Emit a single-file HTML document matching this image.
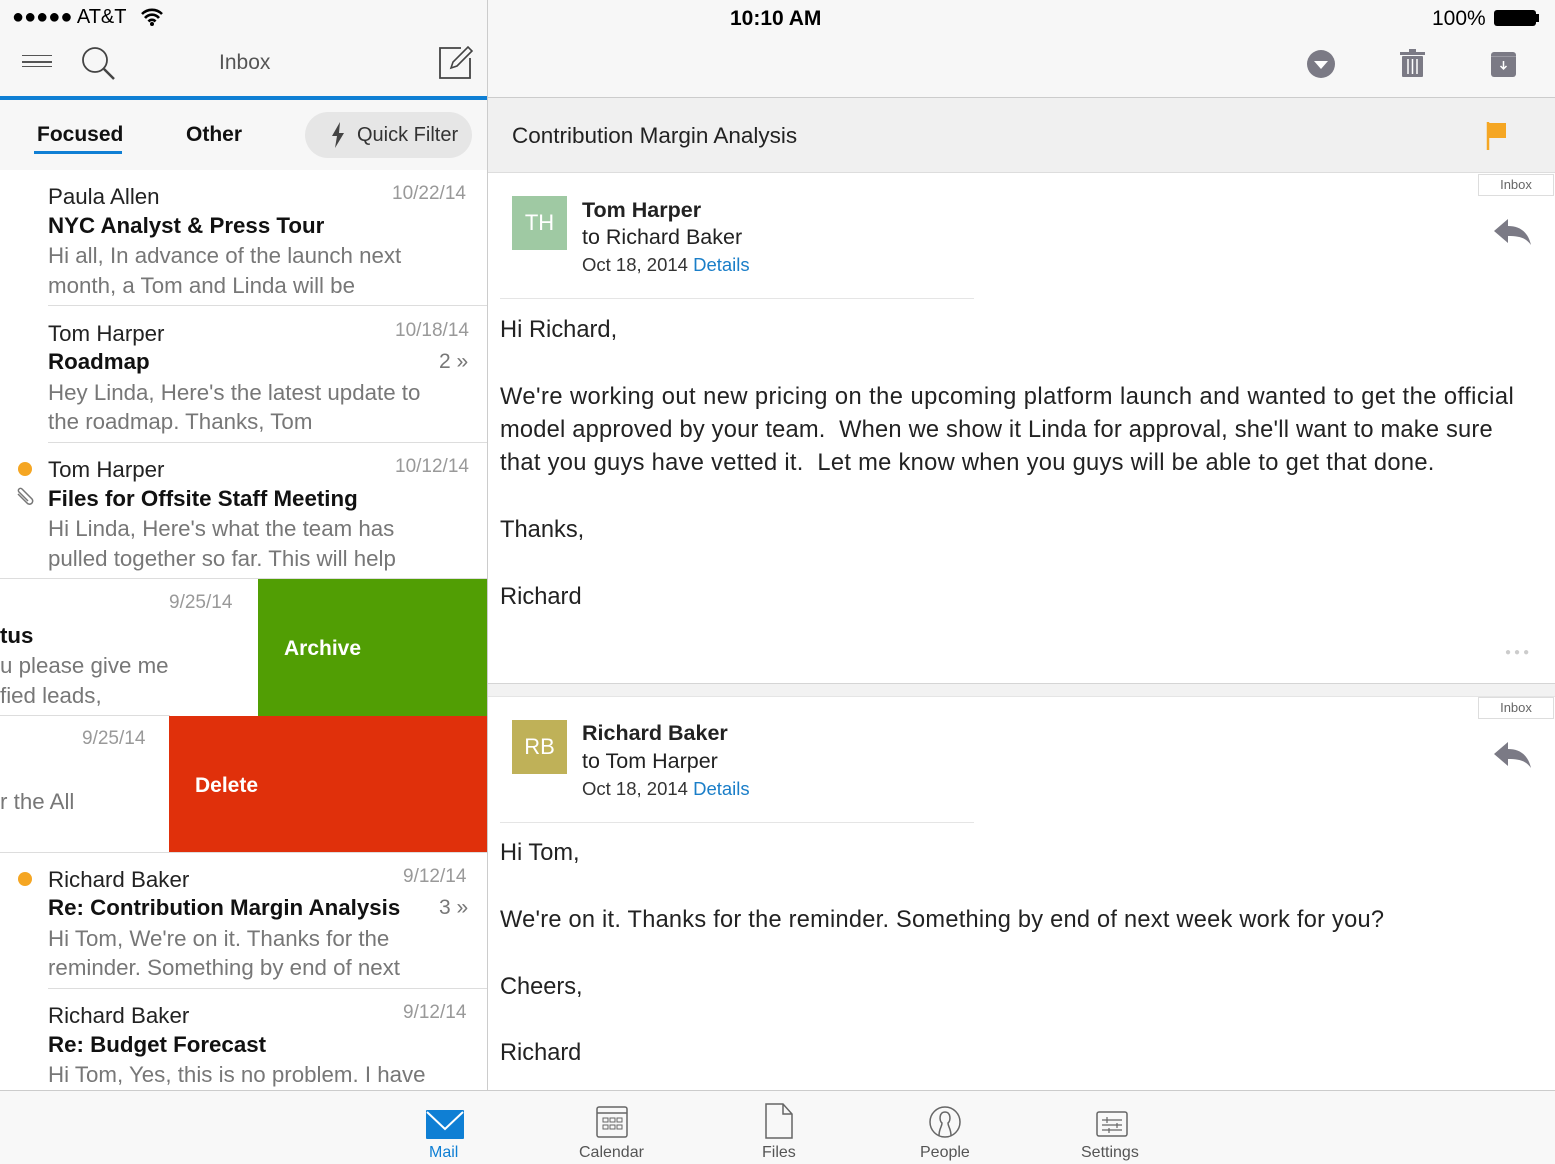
<!DOCTYPE html>
<html><head><meta charset="utf-8"><style>
*{margin:0;padding:0;box-sizing:border-box}
body{width:1555px;height:1164px;overflow:hidden;background:#fff;font-family:"Liberation Sans",sans-serif;color:#222;position:relative}
.a{position:absolute;white-space:nowrap}
.g{color:#777}
.d{color:#999;font-size:19px}
.it{font-size:22.3px}
.b{font-weight:bold;color:#111}
.m{position:absolute;left:500px;font-size:23.7px;color:#222;white-space:nowrap}
.m2{position:absolute;left:500px;font-size:23.6px;color:#222;white-space:nowrap}
</style></head><body>
<!-- top bar -->
<div class="a" style="left:0;top:0;width:1555px;height:97px;background:#f7f7f7"></div>
<div class="a" style="left:488px;top:97px;width:1067px;height:1px;background:#ccc"></div>
<div class="a" style="left:0;top:96px;width:487px;height:4px;background:#0f7fd4"></div>
<div class="a" style="left:12px;top:6px;font-size:20px;color:#000">●●●●● AT&amp;T</div>
<svg class="a" style="left:140px;top:8px" width="24" height="18" viewBox="0 0 24 18"><path d="M2 6a14 14 0 0 1 20 0M5 10a9 9 0 0 1 14 0M8.5 13.5a4.5 4.5 0 0 1 7 0" stroke="#000" stroke-width="2.6" fill="none"/><circle cx="12" cy="16" r="2" fill="#000"/></svg>
<div class="a" style="left:730px;top:7px;font-size:21px;font-weight:bold;color:#000">10:10 AM</div>
<div class="a" style="left:1432px;top:7px;font-size:21px;color:#000">100%</div>
<div class="a" style="left:1494px;top:10px;width:42px;height:16px;background:#000;border-radius:3px"></div>
<div class="a" style="left:1536px;top:14px;width:3px;height:8px;background:#000"></div>
<!-- header icons -->
<div class="a" style="left:22px;top:55px;width:30px;height:12px;border-top:1.5px solid #555;border-bottom:1.5px solid #555"></div>
<div class="a" style="left:22px;top:61px;width:30px;height:1.5px;background:#555"></div>
<svg class="a" style="left:80px;top:45px" width="36" height="36" viewBox="0 0 36 36"><circle cx="15" cy="15" r="12" stroke="#444" stroke-width="1.8" fill="none"/><path d="M24 24l10 10" stroke="#444" stroke-width="2.5"/></svg>
<div class="a" style="left:219px;top:51px;font-size:21px;color:#555">Inbox</div>
<svg class="a" style="left:437px;top:44px" width="38" height="36" viewBox="0 0 38 36"><path d="M24 4H3v30h30V14" stroke="#444" stroke-width="1.8" fill="none"/><path d="M14 24l2-6 15-15 4 4-15 15z" stroke="#444" stroke-width="1.6" fill="none"/></svg>
<svg class="a" style="left:1307px;top:50px" width="28" height="28"><circle cx="14" cy="14" r="14" fill="#7b7a85"/><path d="M7 11h14l-7 8z" fill="#fff"/></svg>
<svg class="a" style="left:1400px;top:48px" width="25" height="30"><rect x="0" y="4" width="25" height="3" fill="#7b7a85"/><rect x="9" y="1" width="7" height="3" fill="#7b7a85"/><rect x="2" y="8" width="21" height="21" rx="1" fill="#7b7a85"/><path d="M8 11v15M12.5 11v15M17 11v15" stroke="#fff" stroke-width="1.5"/></svg>
<svg class="a" style="left:1491px;top:52px" width="25" height="25"><rect x="0" y="0" width="25" height="25" rx="3" fill="#7b7a85"/><rect x="0" y="4" width="25" height="1" fill="#9a99a2"/><path d="M12.5 9v8M9.5 14l3 3 3-3" stroke="#fff" stroke-width="1.5" fill="none"/></svg>
<!-- left pane -->
<div class="a" style="left:0;top:100px;width:487px;height:70px;background:#f7f7f7"></div>
<div class="a b" style="left:37px;top:123px;font-size:21px">Focused</div>
<div class="a" style="left:34px;top:151px;width:88px;height:3px;background:#0f7fd4"></div>
<div class="a b" style="left:186px;top:123px;font-size:21px">Other</div>
<div class="a" style="left:305px;top:112px;width:167px;height:46px;border-radius:23px;background:#e6e6e6"></div>
<svg class="a" style="left:330px;top:122px" width="16" height="26"><path d="M10 0L2 14h5l-2 12 9-15H9z" fill="#444"/></svg>
<div class="a" style="left:357px;top:124px;font-size:20px;color:#333">Quick Filter</div>
<div class="a" style="left:487px;top:0;width:1px;height:1090px;background:#ccc"></div>

<div class="a it" style="left:48px;top:184px">Paula Allen</div><div class="a d" style="left:392px;top:183px">10/22/14</div>
<div class="a it b" style="left:48px;top:213px">NYC Analyst &amp; Press Tour</div>
<div class="a it g" style="left:48px;top:243px">Hi all, In advance of the launch next</div>
<div class="a it g" style="left:48px;top:273px">month, a Tom and Linda will be</div>
<div class="a" style="left:48px;top:305px;width:439px;height:1px;background:#ddd"></div>

<div class="a it" style="left:48px;top:321px">Tom Harper</div><div class="a d" style="left:395px;top:320px">10/18/14</div>
<div class="a it b" style="left:48px;top:349px">Roadmap</div><div class="a g" style="left:439px;top:350px;font-size:21px">2 »</div>
<div class="a it g" style="left:48px;top:380px">Hey Linda, Here's the latest update to</div>
<div class="a it g" style="left:48px;top:409px">the roadmap. Thanks, Tom</div>
<div class="a" style="left:48px;top:442px;width:439px;height:1px;background:#ddd"></div>

<div class="a" style="left:18px;top:462px;width:14px;height:14px;border-radius:7px;background:#f5a623"></div>
<svg class="a" style="left:14px;top:486px" width="22" height="20" viewBox="0 0 22 20"><path d="M4 8l9 9a3 3 0 0 0 5-4L8 3a2 2 0 0 0-3 3l9 9" stroke="#777" stroke-width="1.5" fill="none"/></svg>
<div class="a it" style="left:48px;top:457px">Tom Harper</div><div class="a d" style="left:395px;top:456px">10/12/14</div>
<div class="a it b" style="left:48px;top:486px">Files for Offsite Staff Meeting</div>
<div class="a it g" style="left:48px;top:516px">Hi Linda, Here's what the team has</div>
<div class="a it g" style="left:48px;top:546px">pulled together so far. This will help</div>
<div class="a" style="left:0;top:578px;width:487px;height:1px;background:#ddd"></div>

<div class="a d" style="left:169px;top:592px">9/25/14</div>
<div class="a it b" style="left:0;top:623px">tus</div>
<div class="a it g" style="left:0;top:653px">u please give me</div>
<div class="a it g" style="left:0;top:683px">fied leads,</div>
<div class="a" style="left:258px;top:579px;width:229px;height:137px;background:#519e04"></div>
<div class="a" style="left:284px;top:637px;font-size:21px;font-weight:bold;color:#fff">Archive</div>
<div class="a" style="left:0;top:715px;width:170px;height:1px;background:#ddd"></div>
<div class="a d" style="left:82px;top:728px">9/25/14</div>
<div class="a it g" style="left:0;top:789px">r the All</div>
<div class="a" style="left:169px;top:716px;width:318px;height:136px;background:#e0300b"></div>
<div class="a" style="left:195px;top:774px;font-size:21px;font-weight:bold;color:#fff">Delete</div>
<div class="a" style="left:0;top:852px;width:487px;height:1px;background:#ddd"></div>

<div class="a" style="left:18px;top:872px;width:14px;height:14px;border-radius:7px;background:#f5a623"></div>
<div class="a it" style="left:48px;top:867px">Richard Baker</div><div class="a d" style="left:403px;top:866px">9/12/14</div>
<div class="a it b" style="left:48px;top:895px">Re: Contribution Margin Analysis</div><div class="a g" style="left:439px;top:896px;font-size:21px">3 »</div>
<div class="a it g" style="left:48px;top:926px">Hi Tom, We're on it. Thanks for the</div>
<div class="a it g" style="left:48px;top:955px">reminder. Something by end of next</div>
<div class="a" style="left:48px;top:988px;width:439px;height:1px;background:#ddd"></div>
<div class="a it" style="left:48px;top:1003px">Richard Baker</div><div class="a d" style="left:403px;top:1002px">9/12/14</div>
<div class="a it b" style="left:48px;top:1032px">Re: Budget Forecast</div>
<div class="a it g" style="left:48px;top:1062px">Hi Tom, Yes, this is no problem. I have</div>

<!-- right pane -->
<div class="a" style="left:488px;top:98px;width:1067px;height:75px;background:#f0f0f0;border-bottom:1px solid #ddd"></div>
<div class="a" style="left:512px;top:123px;font-size:22.5px;color:#222">Contribution Margin Analysis</div>
<svg class="a" style="left:1486px;top:122px" width="22" height="28"><path d="M2 0v28" stroke="#f5a623" stroke-width="2.5"/><rect x="2" y="1" width="18" height="15" fill="#f5a623"/></svg>

<div class="a" style="left:1478px;top:174px;width:76px;height:22px;border:1px solid #ddd;font-size:13px;color:#666;text-align:center;line-height:20px">Inbox</div>
<div class="a" style="left:512px;top:196px;width:55px;height:54px;background:#9fc9a3;color:#fff;font-size:22px;text-align:center;line-height:54px">TH</div>
<div class="a" style="left:582px;top:198px;font-size:21.5px;font-weight:bold;color:#222">Tom Harper</div>
<div class="a" style="left:582px;top:225px;font-size:21.5px;color:#222">to Richard Baker</div>
<div class="a" style="left:582px;top:254px;font-size:18.5px;color:#333">Oct 18, 2014 <span style="color:#1a7ec8">Details</span></div>
<svg class="a" style="left:1494px;top:217px" width="38" height="30"><path d="M0 14L14 2v7c12 0 20 6 23 19-5-7-11-9-23-9v7z" fill="#7b7a85"/></svg>
<div class="a" style="left:500px;top:298px;width:474px;height:1px;background:#e5e5e5"></div>
<div class="m" style="top:317px">Hi Richard,</div>
<div class="m" style="top:384px;letter-spacing:0.45px">We're working out new pricing on the upcoming platform launch and wanted to get the official</div>
<div class="m" style="top:417px;letter-spacing:0.2px">model approved by your team.&nbsp; When we show it Linda for approval, she'll want to make sure</div>
<div class="m" style="top:450px;letter-spacing:0.3px">that you guys have vetted it.&nbsp; Let me know when you guys will be able to get that done.</div>
<div class="m" style="top:517px">Thanks,</div>
<div class="m" style="top:584px">Richard</div>
<div class="a" style="left:1505px;top:647px;font-size:10px;color:#ccc;letter-spacing:3px">●●●</div>
<div class="a" style="left:488px;top:683px;width:1067px;height:14px;background:#f2f2f2;border-top:1px solid #d5d5d5;border-bottom:1px solid #e5e5e5"></div>

<div class="a" style="left:1478px;top:697px;width:76px;height:22px;border:1px solid #ddd;font-size:13px;color:#666;text-align:center;line-height:20px">Inbox</div>
<div class="a" style="left:512px;top:720px;width:55px;height:54px;background:#bfb158;color:#fff;font-size:22px;text-align:center;line-height:54px">RB</div>
<div class="a" style="left:582px;top:721px;font-size:21.5px;font-weight:bold;color:#222">Richard Baker</div>
<div class="a" style="left:582px;top:749px;font-size:21.5px;color:#222">to Tom Harper</div>
<div class="a" style="left:582px;top:778px;font-size:18.5px;color:#333">Oct 18, 2014 <span style="color:#1a7ec8">Details</span></div>
<svg class="a" style="left:1494px;top:740px" width="38" height="30"><path d="M0 14L14 2v7c12 0 20 6 23 19-5-7-11-9-23-9v7z" fill="#7b7a85"/></svg>
<div class="a" style="left:500px;top:822px;width:474px;height:1px;background:#e5e5e5"></div>
<div class="m2" style="top:840px">Hi Tom,</div>
<div class="m2" style="top:907px;letter-spacing:0.25px">We're on it. Thanks for the reminder. Something by end of next week work for you?</div>
<div class="m2" style="top:974px">Cheers,</div>
<div class="m2" style="top:1040px">Richard</div>

<!-- tab bar -->
<div class="a" style="left:0;top:1090px;width:1555px;height:74px;background:#f8f8f8;border-top:1px solid #ccc"></div>
<svg class="a" style="left:426px;top:1110px" width="38" height="29"><rect width="38" height="29" rx="1" fill="#0f7fd4"/><path d="M1 2l18 17L37 2" stroke="#fff" stroke-width="2" fill="none"/></svg>
<div class="a" style="left:429px;top:1144px;font-size:16px;color:#0f7fd4">Mail</div>
<svg class="a" style="left:596px;top:1106px" width="32" height="32"><rect x="1" y="1" width="30" height="30" rx="2" stroke="#666" stroke-width="1.5" fill="none"/><path d="M1 7h30" stroke="#666" stroke-width="1.5"/><g fill="none" stroke="#666"><rect x="7" y="12" width="5" height="4"/><rect x="14" y="12" width="5" height="4"/><rect x="21" y="12" width="5" height="4"/><rect x="7" y="19" width="5" height="4"/><rect x="14" y="19" width="5" height="4"/><rect x="21" y="19" width="5" height="4"/></g></svg>
<div class="a" style="left:579px;top:1144px;font-size:16px;color:#555">Calendar</div>
<svg class="a" style="left:765px;top:1103px" width="28" height="36"><path d="M1 1h17l9 10v24H1z M18 1v10h9" stroke="#666" stroke-width="1.5" fill="none"/></svg>
<div class="a" style="left:762px;top:1144px;font-size:16px;color:#555">Files</div>
<svg class="a" style="left:929px;top:1106px" width="32" height="32"><circle cx="16" cy="16" r="15" stroke="#666" stroke-width="1.5" fill="none"/><path d="M10 30c0-8 3-9 3-13-3-2-3-11 3-11s6 9 3 11c0 4 3 5 3 13" stroke="#666" stroke-width="1.5" fill="none"/></svg>
<div class="a" style="left:920px;top:1144px;font-size:16px;color:#555">People</div>
<svg class="a" style="left:1096px;top:1111px" width="32" height="26"><rect x="1" y="1" width="30" height="24" rx="2" stroke="#666" stroke-width="1.5" fill="none"/><path d="M6 9h20M6 14h20M6 19h20M11 6v6M21 12v5M13 17v5" stroke="#666" stroke-width="1.2"/></svg>
<div class="a" style="left:1081px;top:1144px;font-size:16px;color:#555">Settings</div>
</body></html>
